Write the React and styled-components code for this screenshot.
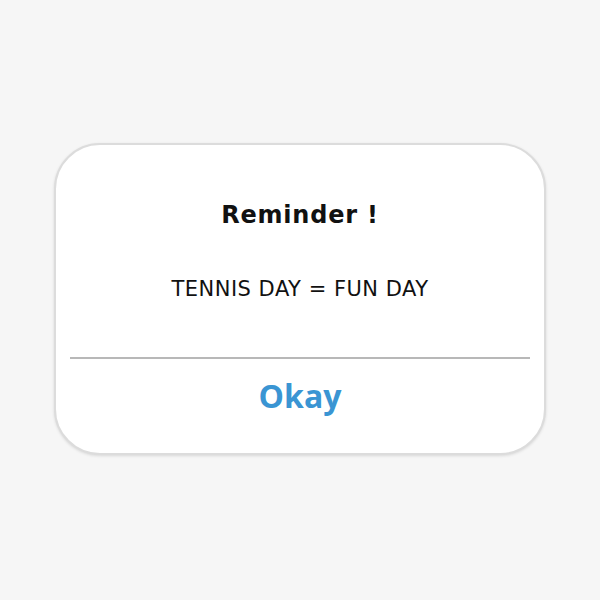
import React from "react";
import styled, { createGlobalStyle } from "styled-components";

const GlobalStyle = createGlobalStyle`
    html, body {
        margin: 0;
        padding: 0;
        background-color: #f6f6f6;
    }
`;

const Page = styled.div`
    width: 600px;
    height: 600px;
    display: flex;
    justify-content: center;
    padding-top: 143px;
    box-sizing: border-box;
`;

const Card = styled.div`
    width: 492px;
    height: 312px;
    box-sizing: border-box;
    background-color: #fff;
    border: 2px solid #dcdcdc;
    border-radius: 46px;
    box-shadow: 0px 1px 3px rgba(0, 0, 0, 0.12);
    display: flex;
    flex-direction: column;
    align-items: center;
    padding: 0 14px;
`;

const Title = styled.h2`
    margin: 55px 0 0;
    font-family: "DejaVu Sans", sans-serif;
    font-weight: 700;
    font-size: 24px;
    letter-spacing: 0.8px;
    line-height: 30px;
    color: #111;
`;

const Message = styled.p`
    margin: 47px 0 0;
    font-family: "DejaVu Sans", sans-serif;
    font-size: 21px;
    letter-spacing: 0.5px;
    line-height: 24px;
    color: #111;
`;

const Divider = styled.hr`
    align-self: stretch;
    margin: 56px 0 0;
    border: none;
    height: 2px;
    background-color: #b8b8b8;
`;

const Button = styled.button`
    margin-top: 17px;
    border: none;
    background: none;
    cursor: pointer;
    font-family: "Open Sans", sans-serif;
    font-weight: 700;
    font-size: 32px;
    line-height: 40px;
    color: #3a95d3;
    padding: 0;
`;

const App = () => {
    return (
        <>
            <GlobalStyle />
            <Page>
                <Card>
                    <Title>Reminder !</Title>
                    <Message>TENNIS DAY = FUN DAY</Message>
                    <Divider />
                    <Button>Okay</Button>
                </Card>
            </Page>
        </>
    );
};

export default App;
